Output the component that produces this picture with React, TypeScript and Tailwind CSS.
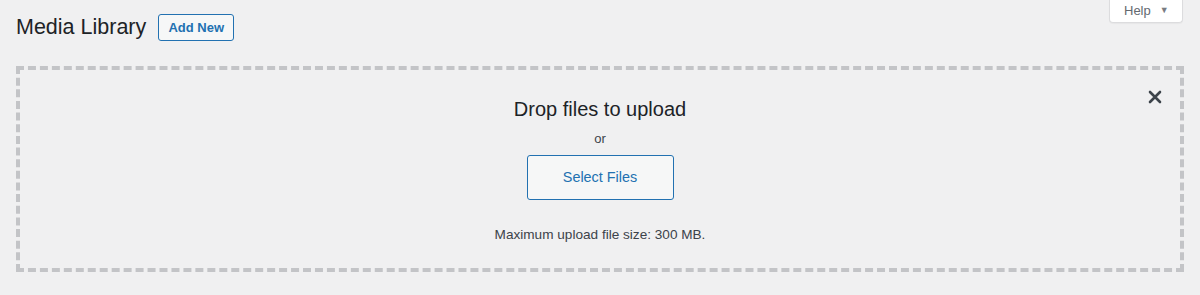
export default function App() {
  return (
    <div className="relative min-h-[295px] bg-[#f0f0f1] px-4 font-['Liberation_Sans',Arial,sans-serif] text-[#1d2327]">
      {/* help tab */}
      <button className="absolute right-[17px] top-0 flex h-[23px] w-[74px] items-center rounded-b-[4px] border border-t-0 border-[#dcdcde] bg-white pl-[14px] text-[13px] text-[#646970] shadow-[0_1px_1px_rgba(0,0,0,0.04)]">
        <span>Help</span>
        <span className="ml-[9px] text-[9px] text-[#787c82]">▼</span>
      </button>

      <div className="flex items-center gap-3 pt-[14px]">
        <h1 className="text-[21.5px] leading-[27px] font-normal text-[#1d2327]">Media Library</h1>
        <button className="h-[27px] w-[76px] rounded-[3px] border border-[#2271b1] bg-[#f6f7f7] text-[13px] font-bold text-[#2271b1]">
          Add New
        </button>
      </div>

      <div className="relative mt-[25px] flex h-[206px] flex-col items-center border-4 border-dashed border-[#c3c4c7]">
        <button className="absolute right-[18px] top-[20px] flex h-[14px] w-[14px] items-center justify-center text-[#3c434a]">
          <svg viewBox="0 0 14 14" className="h-[14px] w-[14px]" fill="none" stroke="currentColor" strokeWidth="2.6" strokeLinecap="round">
            <path d="M2 2 L12 12 M12 2 L2 12" />
          </svg>
        </button>

        <p className="pt-[27px] text-[20px] leading-[24px] text-[#1d2327]">Drop files to upload</p>
        <p className="mt-[10px] text-[13px] leading-[16px] text-[#3c434a]">or</p>
        <button className="mt-[8px] h-[45px] w-[147px] rounded-[3px] border border-[#2271b1] bg-[#f6f7f7] text-[14.4px] text-[#2271b1]">
          Select Files
        </button>
        <p className="mt-[27px] text-[13.6px] leading-[16px] text-[#3c434a]">Maximum upload file size: 300 MB.</p>
      </div>
    </div>
  );
}
